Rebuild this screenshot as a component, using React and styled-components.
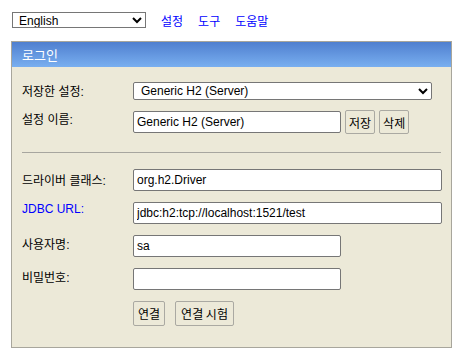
import React, { useState } from "react";
import styled, { createGlobalStyle } from "styled-components";

const GlobalStyle = createGlobalStyle`
  body {
    margin: 0;
    background: #ffffff;
    font-family: "Liberation Sans", Arial, "Noto Sans CJK KR", sans-serif;
    font-size: 12px;
    color: #000;
  }
`;

const Page = styled.div`
  padding: 12px 0 0 11px;
  width: 441px;
`;

const TopBar = styled.div`
  display: flex;
  align-items: center;
  height: 16px;
  margin-left: 1px;
`;

const LangSelect = styled.select`
  width: 134px;
  height: 16px;
  padding: 0 0 0 2px;
  border: 1px solid #767676;
  border-radius: 0;
  background: #fff;
  font: 12px "Liberation Sans", Arial, sans-serif;
  margin-right: 15px;
`;

const TopLink = styled.a`
  color: #0000ff;
  text-decoration: none;
  font-family: "Noto Sans CJK KR", sans-serif;
  font-size: 12px;
  margin-right: 15px;
  cursor: pointer;
`;

const Panel = styled.div`
  margin-top: 13px;
  border: 1px solid #a8a69c;
  background: #ece9d8;
`;

const Header = styled.div`
  height: 25px;
  display: flex;
  align-items: center;
  padding-left: 10px;
  background: linear-gradient(#4f7fcf, #79aff0);
  color: #fff;
  font-family: "Noto Sans CJK KR", sans-serif;
  font-size: 13px;
`;

const Body = styled.div`
  padding: 15px 10px 21px 10px;
`;

const Grid = styled.div`
  display: grid;
  grid-template-columns: 111px 1fr;
  row-gap: ${(p) => p.$gap}px;
  align-items: center;
`;

const Label = styled.div`
  font-family: "Liberation Sans", Arial, "Noto Sans CJK KR", sans-serif;
  font-size: 12px;
  color: ${(p) => (p.$link ? "#0000ff" : "#000")};
  align-self: start;
  padding-top: ${(p) => p.$top || 0}px;
`;

const Cell = styled.div`
  display: flex;
  align-items: center;
  gap: 4px;
`;

const Select = styled.select`
  width: 299px;
  height: 18px;
  padding: 0 0 0 3px;
  border: 1px solid #767676;
  border-radius: 2px;
  background: #fff;
  font: 12px "Liberation Sans", Arial, sans-serif;
`;

const Input = styled.input`
  box-sizing: border-box;
  width: ${(p) => p.$w}px;
  height: 22px;
  padding: 0 3px;
  border: 1px solid #767676;
  border-radius: 2px;
  background: #fff;
  font: 12px "Liberation Sans", Arial, sans-serif;
  outline: none;
`;

const Button = styled.button`
  box-sizing: border-box;
  height: ${(p) => p.$h || 24}px;
  padding: 0 ${(p) => p.$px || 3}px;
  border: 1px solid #aaa9a2;
  border-radius: 2px;
  background: #ece9d8;
  font-family: "Noto Sans CJK KR", sans-serif;
  font-size: 12px;
  color: #000;
  margin-right: ${(p) => p.$mr || 0}px;
`;

const Rule = styled.div`
  height: 1px;
  background: #a7a69f;
  margin: 18px 0 16px 0;
`;

export default function App() {
  const [name, setName] = useState("Generic H2 (Server)");
  const [driver, setDriver] = useState("org.h2.Driver");
  const [url, setUrl] = useState("jdbc:h2:tcp://localhost:1521/test");
  const [user, setUser] = useState("sa");
  const [pass, setPass] = useState("");

  return (
    <>
      <GlobalStyle />
      <Page>
        <TopBar>
          <LangSelect defaultValue="en">
            <option value="en">English</option>
          </LangSelect>
          <TopLink>설정</TopLink>
          <TopLink>도구</TopLink>
          <TopLink>도움말</TopLink>
        </TopBar>
        <Panel>
          <Header>로그인</Header>
          <Body>
            <Grid $gap={10}>
              <Label $top={0}>저장한 설정:</Label>
              <Cell>
                <Select defaultValue="s">
                  <option value="s">Generic H2 (Server)</option>
                </Select>
              </Cell>
              <Label $top={0}>설정 이름:</Label>
              <Cell>
                <Input $w={208} value={name} onChange={(e) => setName(e.target.value)} />
                <Button>저장</Button>
                <Button>삭제</Button>
              </Cell>
            </Grid>
            <Rule />
            <Grid $gap={11}>
              <Label $top={2}>드라이버 클래스:</Label>
              <Cell>
                <Input $w={309} value={driver} onChange={(e) => setDriver(e.target.value)} />
              </Cell>
              <Label $link $top={0}>JDBC URL:</Label>
              <Cell>
                <Input $w={309} value={url} onChange={(e) => setUrl(e.target.value)} />
              </Cell>
              <Label $top={0}>사용자명:</Label>
              <Cell>
                <Input $w={208} value={user} onChange={(e) => setUser(e.target.value)} />
              </Cell>
              <Label $top={0}>비밀번호:</Label>
              <Cell>
                <Input $w={208} type="password" value={pass} onChange={(e) => setPass(e.target.value)} />
              </Cell>
              <div />
              <Cell>
                <Button $h={25} $px={4} $mr={6}>연결</Button>
                <Button $h={25} $px={5}>연결 시험</Button>
              </Cell>
            </Grid>
          </Body>
        </Panel>
      </Page>
    </>
  );
}
